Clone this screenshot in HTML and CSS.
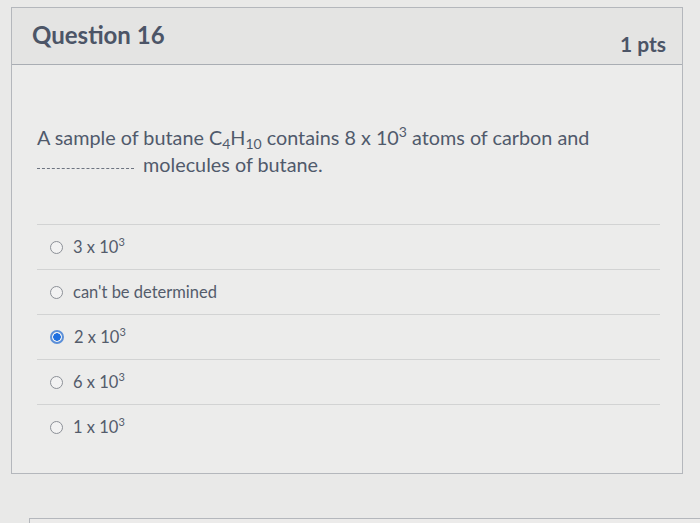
FILE: index.html
```html
<!DOCTYPE html>
<html>
<head>
<meta charset="utf-8">
<link rel="stylesheet" href="styles.css">
</head>
<body>
<div class="card">
  <div class="card-head">
    <h2 class="title">Question 16</h2>
    <span class="pts">1 pts</span>
  </div>
  <div class="card-body">
    <p class="question">A sample of butane C<sub>4</sub>H<sub>10</sub> contains 8 x 10<sup>3</sup> atoms of carbon and<br><span class="blank"></span> molecules of butane.</p>
    <ul class="answers">
      <li class="answer"><span class="radio"></span><span>3 x 10<sup>3</sup></span></li>
      <li class="answer"><span class="radio"></span><span>can't be determined</span></li>
      <li class="answer"><span class="radio checked"></span><span>2 x 10<sup>3</sup></span></li>
      <li class="answer"><span class="radio"></span><span>6 x 10<sup>3</sup></span></li>
      <li class="answer"><span class="radio"></span><span>1 x 10<sup>3</sup></span></li>
    </ul>
  </div>
</div>
<div class="card next"></div>
</body>
</html>
```
FILE: styles.css
```css
html, body {
  margin: 0;
  padding: 0;
}
body {
  background: #e9e9e8;
  font-family: Lato, "Liberation Sans", sans-serif;
  color: #4f5869;
  padding: 7px 0 0 11px;
  height: 523px;
  box-sizing: border-box;
  overflow: hidden;
}
.card {
  width: 670px;
  border: 1px solid #b4b7bc;
  background: #ececeb;
}
.card-head {
  display: flex;
  justify-content: space-between;
  align-items: flex-start;
  height: 56px;
  padding: 0 16px 0 20px;
  background: #e4e4e3;
  border-bottom: 1px solid #a9adb3;
}
.title {
  margin: 12px 0 0 0;
  font-size: 24px;
  font-weight: 700;
  color: #4c5567;
}
.pts {
  margin-top: 23px;
  font-size: 21px;
  font-weight: 700;
  color: #4c5567;
}
.card-body {
  padding: 59px 22px 24px 25px;
}
.question {
  margin: 0;
  font-size: 19.8px;
  line-height: 27px;
  color: #505a6b;
}
.question sub {
  font-size: 14px;
  vertical-align: -4px;
  line-height: 0;
}
.question sup {
  font-size: 14px;
  vertical-align: 8px;
  line-height: 0;
}
.blank {
  display: inline-block;
  width: 97px;
  border-bottom: 1px dashed #6d7480;
  margin-right: 4px;
  vertical-align: 3px;
}
.answers {
  list-style: none;
  margin: 46px 0 0 0;
  padding: 0;
  border-top: 1px solid #d2d3d3;
}
.answer {
  display: flex;
  align-items: center;
  gap: 10px;
  height: 44px;
  padding-left: 13px;
  font-size: 16.5px;
  color: #545c6b;
  border-bottom: 1px solid #d2d3d3;
}
.answer:last-child {
  border-bottom: none;
}
.answer sup {
  font-size: 11px;
  vertical-align: 7px;
  line-height: 0;
}
.radio {
  width: 13px;
  height: 13px;
  border: 1.5px solid #8c9097;
  border-radius: 50%;
  background: #f2f2f2;
  box-sizing: border-box;
  flex: none;
}
.radio.checked {
  border: 2px solid #5b8fd8;
  background: radial-gradient(circle, #1e6fe0 0 3.5px, #f4f4f4 4px);
  width: 14px;
  height: 14px;
}
.next {
  margin: 44px 0 0 18px;
  height: 6px;
  background: #ecebea;
}
```
